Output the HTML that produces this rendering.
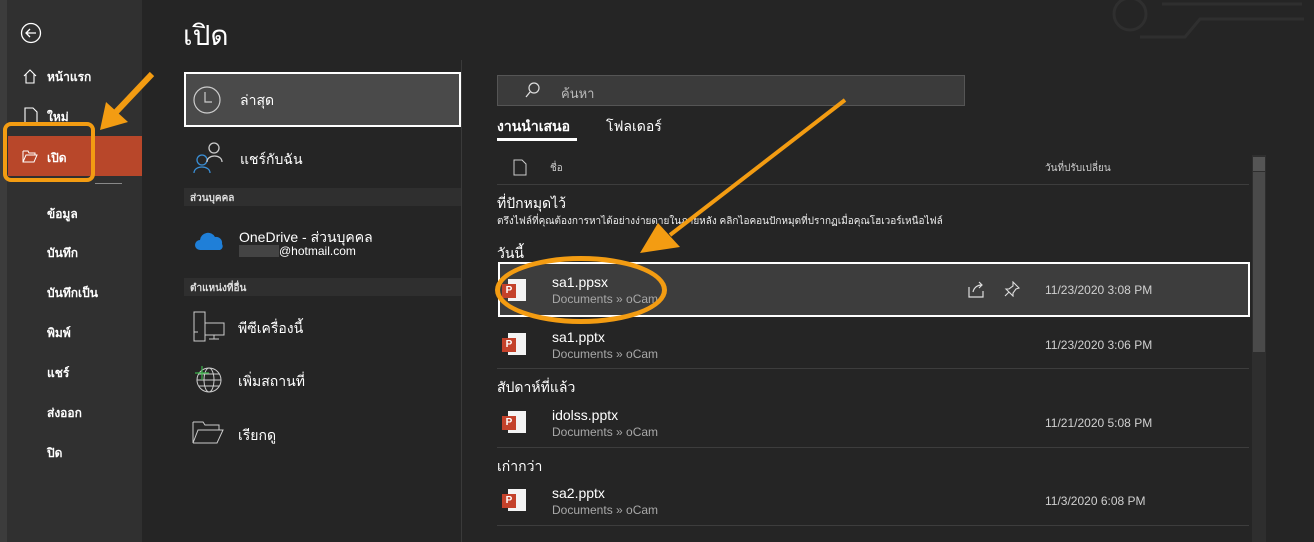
<!DOCTYPE html>
<html><head><meta charset="utf-8"><style>
*{margin:0;padding:0;box-sizing:border-box}
body{width:1314px;height:542px;background:#252525;font-family:"Liberation Sans","Noto Sans CJK SC",sans-serif;color:#fff;position:relative;overflow:hidden}
.a{position:absolute}
.side{left:0;top:0;width:142px;height:542px;background:#303030}
.strip{left:0;top:0;width:7px;height:542px;background:#3c3c3c}
.nav{font-size:12px;color:#fff;font-weight:bold}
.t{font-size:14px}
.sub{font-size:12px;color:#a8a8a8}
.date{font-size:12px;color:#d0d0d0;left:1045px}
.hd{background:#2f2f2f;height:18px;font-size:10px;padding:3px 6px;color:#ddd;font-weight:bold}
.ico{width:18px;height:22px;background:#f4f4f4;left:508px}
.ico b{position:absolute;left:-6px;top:5px;width:14px;height:14px;background:#c4422b;font-size:10px;color:#fff;text-align:center;line-height:14px;font-weight:bold}
</style></head><body>
<div class="a side"></div><div class="a strip"></div>
<svg class="a" style="left:20px;top:22px" width="22" height="22" viewBox="0 0 22 22"><circle cx="11" cy="11" r="9.5" fill="none" stroke="#fff" stroke-width="1.3"/><path d="M16 11H6M10 7l-4 4 4 4" fill="none" stroke="#fff" stroke-width="1.3"/></svg>
<svg class="a" style="left:22px;top:68px" width="16" height="16"><path d="M2 8L8 2l6 6M4 6v9h8V6" fill="none" stroke="#fff" stroke-width="1.1"/></svg>
<div class="a nav" style="left:47px;top:68px">หน้าแรก</div>
<svg class="a" style="left:24px;top:107px" width="14" height="18"><path d="M1 1h8l4 4v12H1z" fill="none" stroke="#fff" stroke-width="1.1"/></svg>
<div class="a nav" style="left:47px;top:108px">ใหม่</div>
<div class="a" style="left:8px;top:136px;width:134px;height:40px;background:#b8472a"></div>
<div class="a" style="left:3px;top:122px;width:92px;height:60px;border:4px solid #f39c12;border-radius:8px"></div>
<svg class="a" style="left:22px;top:149px" width="16" height="14"><path d="M1 2h5l1 2h6v2M1 2v11h11l3-7H4L1 13" fill="none" stroke="#fff" stroke-width="1"/></svg>
<div class="a nav" style="left:47px;top:149px">เปิด</div>
<div class="a" style="left:95px;top:183px;width:27px;height:1px;background:#888"></div>
<div class="a nav" style="left:47px;top:205px">ข้อมูล</div>
<div class="a nav" style="left:47px;top:244px">บันทึก</div>
<div class="a nav" style="left:47px;top:284px">บันทึกเป็น</div>
<div class="a nav" style="left:47px;top:324px">พิมพ์</div>
<div class="a nav" style="left:47px;top:364px">แชร์</div>
<div class="a nav" style="left:47px;top:404px">ส่งออก</div>
<div class="a nav" style="left:47px;top:444px">ปิด</div>
<svg class="a" style="left:50px;top:70px" width="110" height="64"><path d="M102 4L66 42" stroke="#f39c12" stroke-width="6"/><path d="M50 60l6-28 22 20z" fill="#f39c12"/></svg>
<div class="a" style="left:183px;top:14px;font-size:28px">เปิด</div>
<div class="a" style="left:461px;top:60px;width:1px;height:482px;background:#3a3a3a"></div>
<div class="a" style="left:184px;top:72px;width:277px;height:55px;background:#4a4a4a;border:2px solid #fff"></div>
<svg class="a" style="left:192px;top:85px" width="30" height="30"><circle cx="15" cy="15" r="13" fill="none" stroke="#ccc" stroke-width="1.2"/><path d="M13 7v10h7" fill="none" stroke="#ccc" stroke-width="1.2"/></svg>
<div class="a t" style="left:240px;top:90px">ล่าสุด</div>
<svg class="a" style="left:192px;top:141px" width="32" height="34"><circle cx="10" cy="19" r="5" fill="none" stroke="#3a8fd6" stroke-width="1.3"/><path d="M2 32c0-8 16-8 16 0" fill="none" stroke="#3a8fd6" stroke-width="1.3"/><circle cx="22" cy="7" r="5" fill="none" stroke="#ccc" stroke-width="1.3"/><path d="M15 21c0-8 15-8 15 0" fill="none" stroke="#ccc" stroke-width="1.3"/></svg>
<div class="a t" style="left:240px;top:149px">แชร์กับฉัน</div>
<div class="a hd" style="left:184px;top:188px;width:277px">ส่วนบุคคล</div>
<svg class="a" style="left:194px;top:230px" width="30" height="22"><path d="M6 20a5 5 0 010-10 8 8 0 0115-3 6 6 0 017 7 4 4 0 01-2 6z" fill="#1f7fd8"/></svg>
<div class="a t" style="left:239px;top:227px">OneDrive - ส่วนบุคคล</div>
<div class="a" style="left:239px;top:245px;width:40px;height:12px;background:#444"></div>
<div class="a" style="left:279px;top:244px;font-size:12px">@hotmail.com</div>
<div class="a hd" style="left:184px;top:278px;width:277px">ตำแหน่งที่อื่น</div>
<svg class="a" style="left:193px;top:311px" width="32" height="32"><path d="M1 1h11v29H1zM1 21h4M12 12h19v12H12zM21 24v4M16 28h10" fill="none" stroke="#ccc" stroke-width="1"/></svg>
<div class="a t" style="left:238px;top:318px">พีซีเครื่องนี้</div>
<svg class="a" style="left:193px;top:364px" width="30" height="30"><circle cx="16" cy="16" r="12" fill="none" stroke="#ccc"/><ellipse cx="16" cy="16" rx="5" ry="12" fill="none" stroke="#ccc"/><path d="M4 16h24M6 10h20M6 22h20" stroke="#ccc"/><path d="M2 9h14M9 2v14" stroke="#3bb34a" stroke-width="1.2"/></svg>
<div class="a t" style="left:238px;top:371px">เพิ่มสถานที่</div>
<svg class="a" style="left:192px;top:421px" width="32" height="24"><path d="M1 1h10l2 3h14v5M1 1v21l5-13h25l-6 13H1" fill="none" stroke="#ccc"/></svg>
<div class="a t" style="left:238px;top:425px">เรียกดู</div>
<div class="a" style="left:497px;top:75px;width:468px;height:31px;background:#3b3b3b;border:1px solid #555"></div>
<svg class="a" style="left:525px;top:82px" width="16" height="16"><circle cx="9" cy="6" r="5" fill="none" stroke="#ddd" stroke-width="1.2"/><path d="M5 10l-4 5" stroke="#ddd" stroke-width="1.3"/></svg>
<div class="a" style="left:561px;top:83px;font-size:13px;color:#bbb">ค้นหา</div>
<div class="a" style="left:497px;top:116px;font-size:14px;font-weight:bold">งานนำเสนอ</div>
<div class="a" style="left:606px;top:116px;font-size:14px">โฟลเดอร์</div>
<div class="a" style="left:497px;top:138px;width:80px;height:3px;background:#fff"></div>
<svg class="a" style="left:513px;top:159px" width="14" height="17"><path d="M1 1h8l4 4v11H1z" fill="none" stroke="#ccc"/></svg>
<div class="a" style="left:550px;top:161px;font-size:10px;color:#ccc">ชื่อ</div>
<div class="a" style="left:1045px;top:161px;font-size:10px;color:#ccc">วันที่ปรับเปลี่ยน</div>
<div class="a" style="left:497px;top:184px;width:752px;height:1px;background:#3d3d3d"></div>
<div class="a" style="left:1252px;top:155px;width:14px;height:387px;background:#2e2e2e"></div>
<div class="a" style="left:1253px;top:157px;width:12px;height:14px;background:#555"></div>
<div class="a" style="left:1253px;top:172px;width:12px;height:180px;background:#4a4a4a"></div>
<div class="a" style="left:497px;top:193px;font-size:14px">ที่ปักหมุดไว้</div>
<div class="a" style="left:497px;top:214px;font-size:10px;color:#eee">ตรึงไฟล์ที่คุณต้องการหาได้อย่างง่ายดายในภายหลัง คลิกไอคอนปักหมุดที่ปรากฏเมื่อคุณโฮเวอร์เหนือไฟล์</div>
<div class="a" style="left:497px;top:243px;font-size:14px">วันนี้</div>
<div class="a" style="left:498px;top:262px;width:752px;height:55px;background:#3d3d3d;border:2px solid #fff"></div>
<div class="a ico" style="top:279px"><b>P</b></div>
<div class="a t" style="left:552px;top:274px">sa1.ppsx</div><div class="a sub" style="left:552px;top:292px">Documents » oCam</div>
<svg class="a" style="left:968px;top:281px" width="16" height="17"><path d="M1 6v10h14V10M5 11c1-5 5-7 9-7M11 1l3 3-3 3" fill="none" stroke="#ddd" stroke-width="1.2"/></svg>
<svg class="a" style="left:1004px;top:281px" width="16" height="16"><path d="M9 1l6 6-3 1-3 4 0 3-7-7 3 0 4-3zM5 11l-4 4" fill="none" stroke="#ddd" stroke-width="1.1"/></svg>
<div class="a date" style="top:283px">11/23/2020 3:08 PM</div>
<div class="a" style="left:495px;top:256px;width:172px;height:68px;border:5px solid #f39c12;border-radius:50%"></div>
<svg class="a" style="left:620px;top:95px" width="230" height="170"><path d="M225 5L50 140" stroke="#f39c12" stroke-width="4"/><path d="M20 158l18-30 22 24z" fill="#f39c12"/></svg>
<div class="a ico" style="top:333px"><b>P</b></div>
<div class="a t" style="left:552px;top:329px">sa1.pptx</div><div class="a sub" style="left:552px;top:347px">Documents » oCam</div>
<div class="a date" style="top:338px">11/23/2020 3:06 PM</div>
<div class="a" style="left:497px;top:368px;width:752px;height:1px;background:#3d3d3d"></div>
<div class="a" style="left:497px;top:377px;font-size:14px">สัปดาห์ที่แล้ว</div>
<div class="a ico" style="top:411px"><b>P</b></div>
<div class="a t" style="left:552px;top:407px">idolss.pptx</div><div class="a sub" style="left:552px;top:425px">Documents » oCam</div>
<div class="a date" style="top:416px">11/21/2020 5:08 PM</div>
<div class="a" style="left:497px;top:447px;width:752px;height:1px;background:#3d3d3d"></div>
<div class="a" style="left:497px;top:456px;font-size:14px">เก่ากว่า</div>
<div class="a ico" style="top:489px"><b>P</b></div>
<div class="a t" style="left:552px;top:485px">sa2.pptx</div><div class="a sub" style="left:552px;top:503px">Documents » oCam</div>
<div class="a date" style="top:494px">11/3/2020 6:08 PM</div>
<div class="a" style="left:497px;top:525px;width:752px;height:1px;background:#3d3d3d"></div>
<svg class="a" style="left:1090px;top:0" width="224" height="45"><g fill="none" stroke="#2f2f2f" stroke-width="3"><circle cx="40" cy="14" r="16"/><path d="M50 37H95l15-18h104M72 4h140"/></g></svg>
</body></html>
